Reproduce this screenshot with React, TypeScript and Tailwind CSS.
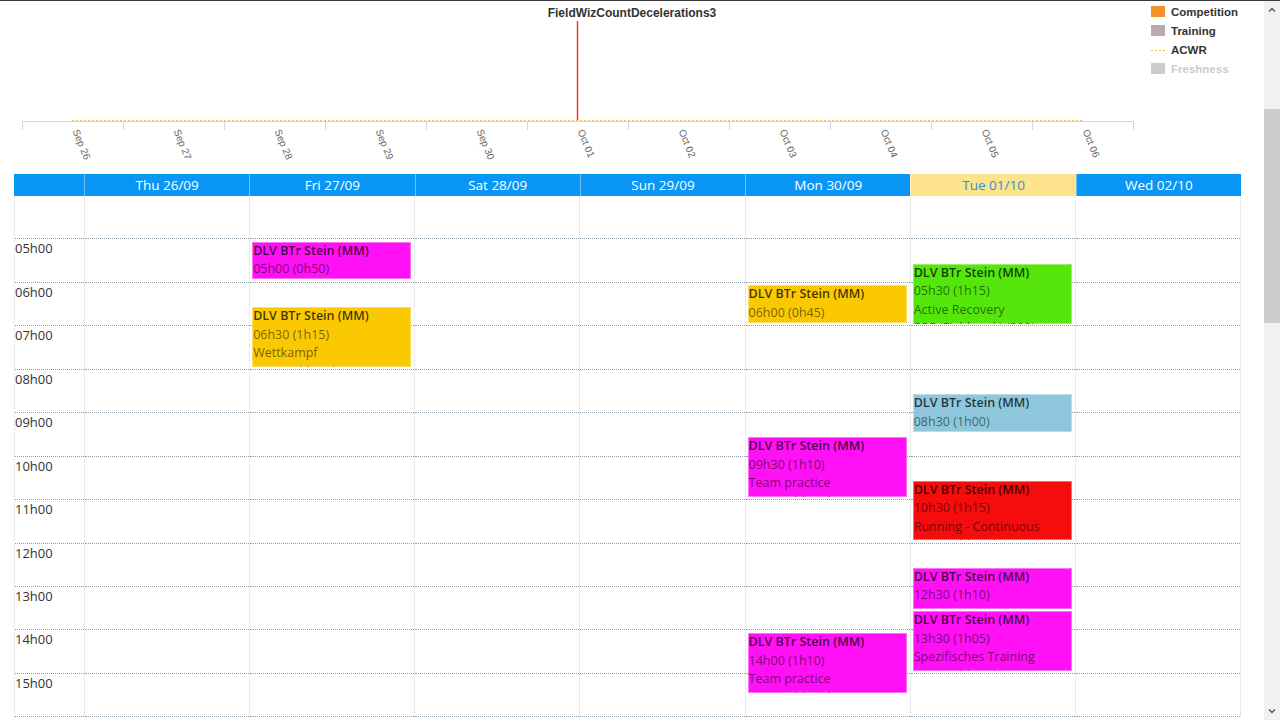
import React from 'react';

type CalEvent = {
  day: number;
  start: number; // hours from midnight
  height: number;
  color: string;
  lines: string[];
};

const HOUR_PX = 43.45;
const FIRST_HOUR = 4;

const DAYS = ['Thu 26/09', 'Fri 27/09', 'Sat 28/09', 'Sun 29/09', 'Mon 30/09', 'Tue 01/10', 'Wed 02/10'];
const TODAY = 5;
const HOURS = [4, 5, 6, 7, 8, 9, 10, 11, 12, 13, 14, 15];

const TICK_LABELS = ['Sep 26', 'Sep 27', 'Sep 28', 'Sep 29', 'Sep 30', 'Oct 01', 'Oct 02', 'Oct 03', 'Oct 04', 'Oct 05', 'Oct 06'];

const EVENTS: CalEvent[] = [
  { day: 1, start: 5, height: 37, color: 'bg-[#ff10f5]', lines: ['DLV BTr Stein (MM)', '05h00 (0h50)'] },
  { day: 1, start: 6.5, height: 60, color: 'bg-[#fbc902]', lines: ['DLV BTr Stein (MM)', '06h30 (1h15)', 'Wettkampf', 'RPE (Fieldwork) (375)'] },
  { day: 4, start: 6, height: 38, color: 'bg-[#fbc902]', lines: ['DLV BTr Stein (MM)', '06h00 (0h45)'] },
  { day: 4, start: 9.5, height: 60, color: 'bg-[#ff10f5]', lines: ['DLV BTr Stein (MM)', '09h30 (1h10)', 'Team practice', 'RPE (Fieldwork) (420)'] },
  { day: 4, start: 14, height: 60, color: 'bg-[#ff10f5]', lines: ['DLV BTr Stein (MM)', '14h00 (1h10)', 'Team practice', 'RPE (Fieldwork) (420)'] },
  { day: 5, start: 5.5, height: 60, color: 'bg-[#55e60c]', lines: ['DLV BTr Stein (MM)', '05h30 (1h15)', 'Active Recovery', 'RPE (Fieldwork) (300)'] },
  { day: 5, start: 8.5, height: 38, color: 'bg-[#8ec7dc]', lines: ['DLV BTr Stein (MM)', '08h30 (1h00)'] },
  { day: 5, start: 10.5, height: 59, color: 'bg-[#f50c0c]', lines: ['DLV BTr Stein (MM)', '10h30 (1h15)', 'Running - Continuous', 'RPE (Fieldwork) (300)'] },
  { day: 5, start: 12.5, height: 41, color: 'bg-[#ff10f5]', lines: ['DLV BTr Stein (MM)', '12h30 (1h10)'] },
  { day: 5, start: 13.5, height: 60, color: 'bg-[#ff10f5]', lines: ['DLV BTr Stein (MM)', '13h30 (1h05)', 'Spezifisches Training', 'RPE (Fieldwork) (325)'] },
];

const pad = (h: number) => (h < 10 ? `0${h}` : `${h}`);

const LoadChart: React.FC = () => {
  const left = 22;
  const step = 101;
  return (
    <svg width={1264} height={173} className="block" style={{ fontFamily: '"Liberation Sans", Arial, sans-serif' }}>
      <text x={632} y={16} textAnchor="middle" fontSize={12} fontWeight="bold" fill="#333">
        FieldWizCountDecelerations3
      </text>

      {/* today marker */}
      <line x1={577.5} y1={20} x2={577.5} y2={120} stroke="#ff2a1a" strokeWidth={1.4} />

      {/* x axis */}
      <line x1={left} y1={120.5} x2={left + step * 11} y2={120.5} stroke="#ccd6eb" />
      {Array.from({ length: 12 }).map((_, i) => (
        <line key={i} x1={left + step * i + 0.5} y1={120} x2={left + step * i + 0.5} y2={129} stroke="#ccd6eb" />
      ))}
      <line x1={72} y1={119.5} x2={1083} y2={119.5} stroke="#e9c54f" strokeDasharray="2 2" />
      {TICK_LABELS.map((label, i) => {
        const x = left + step * i + 50.5;
        return (
          <text key={label} x={x} y={130} fontSize={10} fill="#666" transform={`rotate(68 ${x} 130)`}>
            {label}
          </text>
        );
      })}

      {/* legend */}
      <g fontSize={11.5} fontWeight="bold">
        <rect x={1151} y={5} width={14} height={11} fill="#f5902a" />
        <text x={1171} y={15} fill="#333">Competition</text>
        <rect x={1151} y={24} width={14} height={11} fill="#b8aaae" />
        <text x={1171} y={34} fill="#333">Training</text>
        <line x1={1151} y1={49.5} x2={1165} y2={49.5} stroke="#e9c54f" strokeDasharray="2 2" />
        <text x={1171} y={53} fill="#333">ACWR</text>
        <rect x={1151} y={62} width={14} height={11} fill="#cccccc" />
        <text x={1171} y={72} fill="#cccccc">Freshness</text>
      </g>
    </svg>
  );
};

const EventBlock: React.FC<{ ev: CalEvent }> = ({ ev }) => (
  <div
    className={`absolute left-[2px] right-[3px] overflow-hidden pl-px ring-1 ring-inset ring-white/40 ${ev.color}`}
    style={{ top: (ev.start - FIRST_HOUR) * HOUR_PX + 2.5, height: ev.height }}
  >
    {ev.lines.map((line, i) => (
      <div
        key={i}
        className={`whitespace-nowrap text-[12.5px] leading-[18.5px] ${i === 0 ? 'font-semibold text-black/75' : 'text-black/55'}`}
      >
        {line}
      </div>
    ))}
  </div>
);

const WeekCalendar: React.FC = () => (
  <div className="ml-[14px] w-[1227px]" style={{ fontFamily: '"Open Sans", "Noto Sans", sans-serif' }}>
    <div className="grid h-[22px] grid-cols-[70px_repeat(7,minmax(0,1fr))] bg-[#0a96f4] text-[13.5px] leading-[22px]">
      <div />
      {DAYS.map((d, i) => (
        <div
          key={d}
          className={`border-l border-white/40 text-center ${i === TODAY ? 'bg-[#fde38c] text-[#2f8fd8]' : 'text-white'}`}
        >
          {d}
        </div>
      ))}
    </div>

    <div className="grid grid-cols-[70px_repeat(7,minmax(0,1fr))] border-r border-dotted border-[#d6d6d6]">
      <div className="border-l border-dotted border-[#d6d6d6]">
        {HOURS.map((h, i) => (
          <div key={h} className="h-[43.45px] border-b border-dotted border-[#8c9eac] text-[13px] leading-[18px] text-[#333]">
            {i > 0 ? `${pad(h)}h00` : ''}
          </div>
        ))}
      </div>
      {DAYS.map((d, di) => (
        <div key={d} className="relative border-l border-dotted border-[#d6d6d6]">
          {HOURS.map((h) => (
            <div key={h} className="h-[43.45px] border-b border-dotted border-[#8c9eac]" />
          ))}
          {EVENTS.filter((e) => e.day === di).map((ev, i) => (
            <EventBlock key={i} ev={ev} />
          ))}
        </div>
      ))}
    </div>
  </div>
);

const Scrollbar: React.FC = () => (
  <div className="flex w-[16px] flex-col bg-[#f1f1f1]">
    <div className="flex h-[16px] items-center justify-center">
      <svg width="8" height="5" viewBox="0 0 8 5">
        <polyline points="1,4.5 4,1.5 7,4.5" fill="none" stroke="#505050" strokeWidth="1.3" />
      </svg>
    </div>
    <div className="mt-[92px] h-[214px] bg-[#cdcdcd]" />
    <div className="flex-1" />
    <div className="flex h-[18px] items-center justify-center">
      <svg width="8" height="5" viewBox="0 0 8 5">
        <polyline points="1,0.5 4,3.5 7,0.5" fill="none" stroke="#505050" strokeWidth="1.3" />
      </svg>
    </div>
  </div>
);

export default function App() {
  return (
    <div className="flex h-[720px] w-[1280px] flex-col overflow-hidden bg-white">
      <div className="h-px bg-[#3a3a3a]" />
      <div className="flex min-h-0 flex-1">
        <div className="min-w-0 flex-1">
          <LoadChart />
          <WeekCalendar />
        </div>
        <Scrollbar />
      </div>
    </div>
  );
}
